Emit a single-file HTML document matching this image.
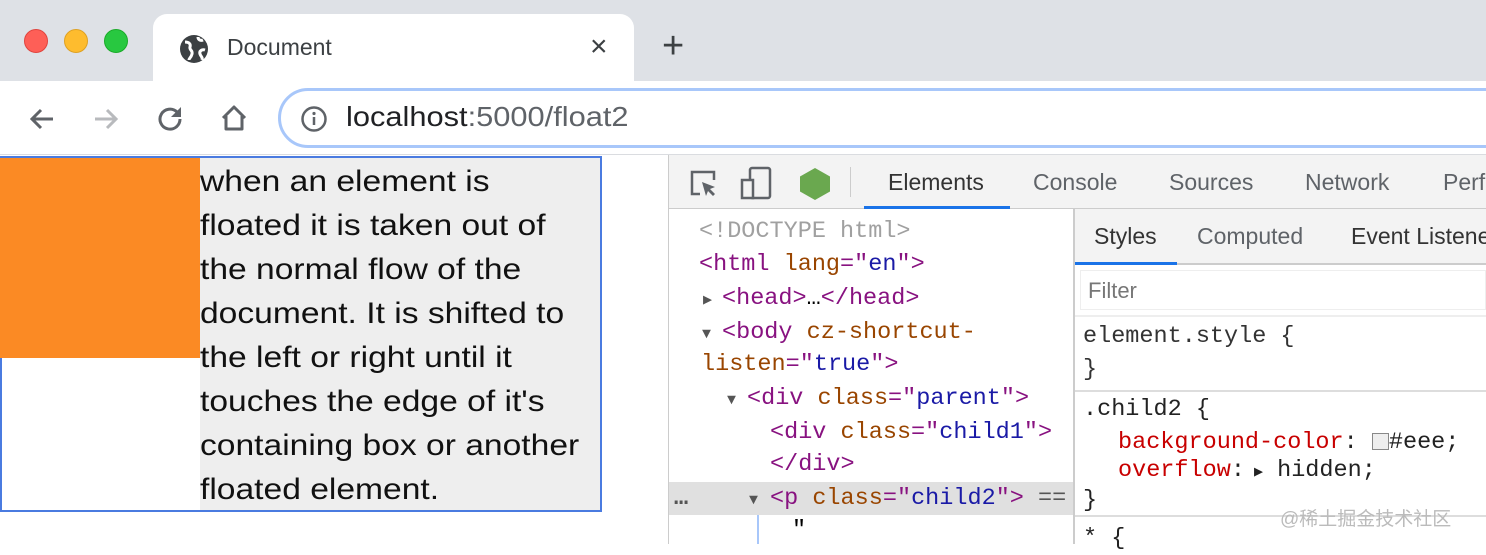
<!DOCTYPE html>
<html><head><meta charset="utf-8"><style>
*{margin:0;padding:0;box-sizing:border-box}
body{width:1486px;height:544px;overflow:hidden;background:#fff;font-family:"Liberation Sans",sans-serif;position:relative}
.a{position:absolute}
.mono{font-family:"Liberation Mono","DejaVu Sans Mono",monospace;font-size:23.5px;white-space:pre;line-height:33px}
.tag{color:#881280}.an{color:#994500}.av{color:#1a1aa6}.gr{color:#a0a0a0}.pu{color:#c80000}
.pt{white-space:nowrap;font-size:30px;line-height:44px;color:#111;transform:scaleX(1.12);transform-origin:0 0}
.tr{font-size:15px;color:#555}
</style></head><body>
<!-- tab bar -->
<div class="a" style="left:0;top:0;width:1486px;height:81px;background:#dee1e6"></div>
<div class="a" style="left:24px;top:29px;width:24px;height:24px;border-radius:50%;background:#fe5f57;border:1px solid #e0443e"></div>
<div class="a" style="left:64px;top:29px;width:24px;height:24px;border-radius:50%;background:#febc2e;border:1px solid #dea123"></div>
<div class="a" style="left:104px;top:29px;width:24px;height:24px;border-radius:50%;background:#28c840;border:1px solid #1aab29"></div>
<div class="a" style="left:153px;top:14px;width:481px;height:70px;background:#fff;border-radius:14px 14px 0 0"></div>
<svg class="a" style="left:178px;top:33px" width="32" height="32" viewBox="0 0 32 32"><circle cx="16" cy="16" r="14" fill="#3c4043"/><path d="M7 9c4 0 6 2 5 5s3 3 2 7-3 4-3 6M20 4c0 3 3 4 5 3M27 17c-3-1-6 1-5 4s3 3 2 6" stroke="#fff" stroke-width="3" fill="none"/></svg>
<div class="a" style="left:227px;top:34px;font-size:23px;color:#3c4043">Document</div>
<div class="a" style="left:590px;top:30px;font-size:30px;color:#3c4043">×</div>
<div class="a" style="left:662px;top:25px;font-size:38px;color:#3c4043;font-weight:300">+</div>
<!-- toolbar -->
<svg class="a" style="left:26px;top:103px" width="32" height="32" viewBox="0 0 32 32"><path d="M27 16H6M15 7l-9 9 9 9" stroke="#5f6368" stroke-width="3" fill="none"/></svg>
<svg class="a" style="left:90px;top:103px" width="32" height="32" viewBox="0 0 32 32"><path d="M5 16h21M17 7l9 9-9 9" stroke="#b8babd" stroke-width="3" fill="none"/></svg>
<svg class="a" style="left:155px;top:103px" width="32" height="32" viewBox="0 0 32 32"><path d="M25 16a10 10 0 1 1-3-7" stroke="#5f6368" stroke-width="3" fill="none"/><path d="M26 4v10H16z" fill="#5f6368"/></svg>
<svg class="a" style="left:218px;top:102px" width="32" height="32" viewBox="0 0 32 32"><path d="M5 16L16 5l11 11M8 14v13h16V14" stroke="#5f6368" stroke-width="3" fill="none" stroke-linejoin="round"/></svg>
<div class="a" style="left:278px;top:88px;width:1240px;height:60px;border:3px solid #a8c7fa;border-radius:30px"></div>
<svg class="a" style="left:300px;top:105px" width="28" height="28" viewBox="0 0 28 28"><circle cx="14" cy="14" r="11.5" stroke="#5f6368" stroke-width="2.5" fill="none"/><path d="M14 12v8" stroke="#5f6368" stroke-width="2.5"/><circle cx="14" cy="8.5" r="1.6" fill="#5f6368"/></svg>
<div class="a" style="left:346px;top:101px;font-size:28px;color:#202124;transform:scaleX(1.1);transform-origin:0 0;white-space:nowrap">localhost<span style="color:#5f6368">:5000/float2</span></div>
<div class="a" style="left:0;top:154px;width:1486px;height:1px;background:#dadce0"></div>
<!-- page -->
<div class="a" style="left:0;top:156px;width:602px;height:356px;border:2px solid #4a7be0"></div>
<div class="a" style="left:200px;top:158px;width:400px;height:352px;background:#eee"></div>
<div class="a" style="left:0;top:158px;width:200px;height:200px;background:#fb8a24"></div>
<div class="a pt" style="left:200px;top:160px">when an element is<br>floated it is taken out of<br>the normal flow of the<br>document. It is shifted to<br>the left or right until it<br>touches the edge of it's<br>containing box or another<br>floated element.</div>
<!-- devtools -->
<div class="a" style="left:668px;top:155px;width:818px;height:389px;background:#fff;border-left:1px solid #ccc"></div>
<div class="a" style="left:669px;top:155px;width:817px;height:54px;background:#f3f3f3;border-bottom:1px solid #ccc"></div>
<svg class="a" style="left:688px;top:168px" width="32" height="32" viewBox="0 0 32 32"><path d="M12 26H4V4h22v8" stroke="#5f6368" stroke-width="2.5" fill="none"/><path d="M14 14l13 5-5 2 5 5-2 2-5-5-2 5z" fill="#5f6368"/></svg>
<svg class="a" style="left:740px;top:166px" width="34" height="34" viewBox="0 0 34 34"><rect x="10" y="2" width="20" height="30" rx="2" stroke="#5f6368" stroke-width="2.5" fill="none"/><rect x="2" y="14" width="11" height="18" stroke="#5f6368" stroke-width="2.5" fill="#f3f3f3"/></svg>
<svg class="a" style="left:799px;top:167px" width="32" height="34" viewBox="0 0 32 34"><path d="M16 1l15 8.5v15L16 33 1 24.5v-15z" fill="#6aa84f"/></svg>
<div class="a" style="left:850px;top:167px;width:1px;height:30px;background:#ccc"></div>
<div class="a" style="left:888px;top:169px;font-size:23px;color:#333">Elements</div>
<div class="a" style="left:864px;top:206px;width:146px;height:3px;background:#1a73e8"></div>
<div class="a" style="left:1033px;top:169px;font-size:23px;color:#5f6368">Console</div>
<div class="a" style="left:1169px;top:169px;font-size:23px;color:#5f6368">Sources</div>
<div class="a" style="left:1305px;top:169px;font-size:23px;color:#5f6368">Network</div>
<div class="a" style="left:1443px;top:169px;font-size:23px;color:#5f6368">Perf</div>
<!-- elements tree -->
<div class="a" style="left:669px;top:482px;width:404px;height:33px;background:#e0e0e0"></div>
<div class="a" style="left:757px;top:515px;width:2px;height:29px;background:#a8c7fa"></div>
<div class="a mono" style="left:699px;top:215px"><span class="gr">&lt;!DOCTYPE html&gt;</span></div>
<div class="a mono" style="left:699px;top:248px"><span class="tag">&lt;html</span> <span class="an">lang</span><span class="tag">="</span><span class="av">en</span><span class="tag">"&gt;</span></div>
<div class="a mono" style="left:703px;top:282px"><span class="tr">▶</span></div>
<div class="a mono" style="left:722px;top:282px"><span class="tag">&lt;head&gt;</span>…<span class="tag">&lt;/head&gt;</span></div>
<div class="a mono" style="left:702px;top:316px"><span class="tr">▼</span></div>
<div class="a mono" style="left:722px;top:316px"><span class="tag">&lt;body</span> <span class="an">cz-shortcut-</span></div>
<div class="a mono" style="left:701px;top:348px"><span class="an">listen</span><span class="tag">="</span><span class="av">true</span><span class="tag">"&gt;</span></div>
<div class="a mono" style="left:727px;top:382px"><span class="tr">▼</span></div>
<div class="a mono" style="left:747px;top:382px"><span class="tag">&lt;div</span> <span class="an">class</span><span class="tag">="</span><span class="av">parent</span><span class="tag">"&gt;</span></div>
<div class="a mono" style="left:770px;top:416px"><span class="tag">&lt;div</span> <span class="an">class</span><span class="tag">="</span><span class="av">child1</span><span class="tag">"&gt;</span></div>
<div class="a mono" style="left:770px;top:448px"><span class="tag">&lt;/div&gt;</span></div>
<div class="a mono" style="left:674px;top:482px;color:#555;font-weight:bold">…</div>
<div class="a mono" style="left:749px;top:482px"><span class="tr">▼</span></div>
<div class="a mono" style="left:770px;top:482px;width:303px;overflow:hidden"><span class="tag">&lt;p</span> <span class="an">class</span><span class="tag">="</span><span class="av">child2</span><span class="tag">"&gt;</span> <span style="color:#555">==</span></div>
<div class="a mono" style="left:792px;top:514px">"</div>
<!-- sidebar -->
<div class="a" style="left:1073px;top:209px;width:2px;height:335px;background:#ccc"></div>
<div class="a" style="left:1075px;top:209px;width:411px;height:56px;background:#f3f3f3;border-bottom:2px solid #ccc"></div>
<div class="a" style="left:1094px;top:223px;font-size:23px;color:#333">Styles</div>
<div class="a" style="left:1075px;top:262px;width:102px;height:3px;background:#1a73e8"></div>
<div class="a" style="left:1197px;top:223px;font-size:23px;color:#5f6368">Computed</div>
<div class="a" style="left:1351px;top:223px;font-size:23px;color:#333;white-space:nowrap">Event Listeners</div>
<div class="a" style="left:1080px;top:270px;width:406px;height:40px;background:#fff;border:1px solid #eee"></div>
<div class="a" style="left:1088px;top:278px;font-size:22px;color:#777">Filter</div>
<div class="a" style="left:1075px;top:315px;width:411px;height:2px;background:#eee"></div>
<div class="a" style="left:1075px;top:390px;width:411px;height:2px;background:#ddd"></div>
<div class="a" style="left:1075px;top:515px;width:411px;height:2px;background:#ddd"></div>
<div class="a mono" style="left:1083px;top:320px;color:#333">element.style {
}</div>
<div class="a mono" style="left:1083px;top:393px;color:#222">.child2 {</div>
<div class="a mono" style="left:1118px;top:426px;color:#222"><span class="pu">background-color</span>: <span style="display:inline-block;width:17px;height:17px;border:1px solid #888;background:#eee;vertical-align:-2px"></span>#eee;</div>
<div class="a mono" style="left:1118px;top:454px;color:#222"><span class="pu">overflow</span>:<span style="font-size:15px"> ▶</span> hidden;</div>
<div class="a mono" style="left:1083px;top:484px;color:#222">}</div>
<div class="a mono" style="left:1083px;top:522px;color:#222">* {</div>
<div class="a" style="left:1280px;top:504px;font-size:19px;color:#bbb;font-family:'Liberation Sans','Noto Sans CJK SC',sans-serif">@稀土掘金技术社区</div>
</body></html>
